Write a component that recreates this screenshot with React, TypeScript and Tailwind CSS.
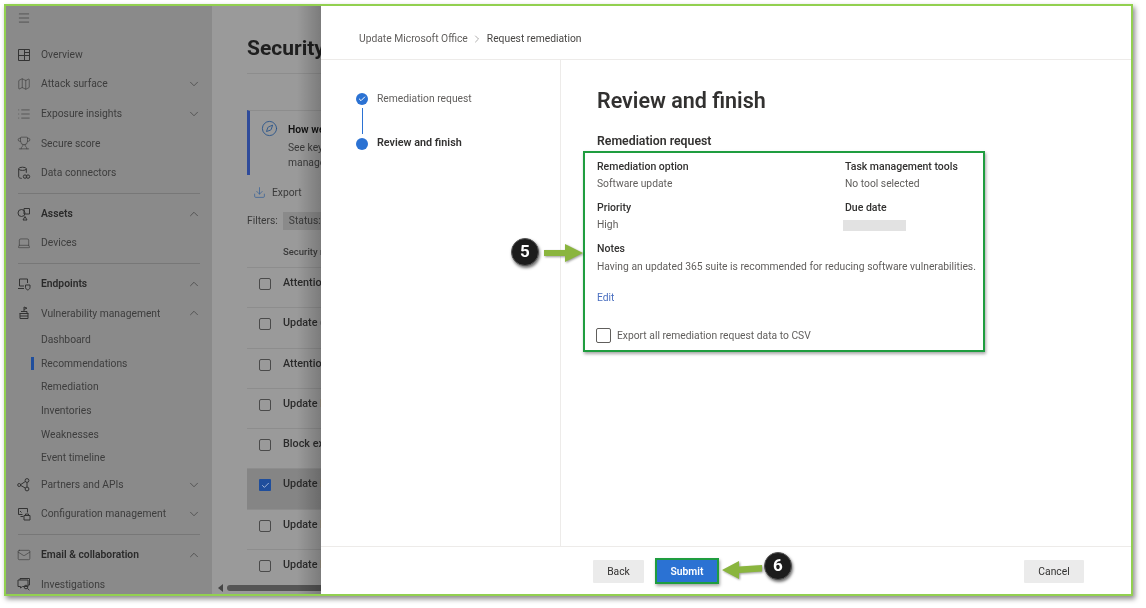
import { Check, ChevronDown, ChevronRight, ChevronUp, Compass, Download, Laptop, List, Mail, Map, Menu, Trophy } from 'lucide-react';

function OverviewIcon() {
  return (
    <svg width="14" height="14" viewBox="0 0 14 14" fill="none" stroke="currentColor" strokeWidth="1">
      <path d="M1.500 1.500h11v11h-11zM1.500 7.500h11M7.500 7.500v5M7.500 1.500v6M7.500 4.500h5" />
    </svg>
  );
}

function DataIcon() {
  return (
    <svg width="14" height="14" viewBox="0 0 14 14" fill="none" stroke="currentColor" strokeWidth="1">
      <ellipse cx="5.500" cy="2.800" rx="3.800" ry="1.600" />
      <path d="M1.700 2.800v8c0 .9 1.300 1.500 3 1.600M9.300 2.800v4" />
      <circle cx="8" cy="10.600" r="1.700" />
      <circle cx="11" cy="10.600" r="1.700" />
    </svg>
  );
}

function AssetsIcon() {
  return (
    <svg width="14" height="14" viewBox="0 0 14 14" fill="none" stroke="currentColor" strokeWidth="1">
      <circle cx="4.500" cy="6" r="3.500" />
      <path d="M7 1.500h5.500v5.500H7zM6 13l2-3.500 2 3.500z" />
    </svg>
  );
}

function EndpointIcon() {
  return (
    <svg width="14" height="14" viewBox="0 0 14 14" fill="none" stroke="currentColor" strokeWidth="1">
      <path d="M7 9H2.500V2h8v4M1 11.500h6" />
      <path d="M8.500 8h4.500v2.500c0 1.200-1 2-2.200 2.500-1.200-.5-2.300-1.300-2.300-2.500z" />
    </svg>
  );
}

function VulnIcon() {
  return (
    <svg width="14" height="14" viewBox="0 0 14 14" fill="none" stroke="currentColor" strokeWidth="1">
      <path d="M7 5V1l3 1.200L7 3.400M2.500 7.500h9M4 5.500h6v2M3 7.500v5h8v-5M3 10h8" />
    </svg>
  );
}

function PartnersIcon() {
  return (
    <svg width="14" height="14" viewBox="0 0 14 14" fill="none" stroke="currentColor" strokeWidth="1">
      <circle cx="2.200" cy="7" r="1.500" />
      <circle cx="10" cy="2.500" r="1.900" />
      <circle cx="10" cy="11" r="1.900" />
      <path d="M3.700 6.600 8.300 3.500M3.700 7.400l4.700 2.700M10 4.500v4.600" />
    </svg>
  );
}

function ConfigIcon() {
  return (
    <svg width="14" height="14" viewBox="0 0 14 14" fill="none" stroke="currentColor" strokeWidth="1">
      <path d="M1.500 7.500v-6h9v4M1.500 7.500h4M3 4l1.500 1.500M3.500 9.500h3" />
      <path d="M7 8.500h6v4.500H7zM8.500 8.500V7h3v1.500" />
    </svg>
  );
}

function InvestigationIcon() {
  return (
    <svg width="14" height="14" viewBox="0 0 14 14" fill="none" stroke="currentColor" strokeWidth="1">
      <path d="M3 3V1.500h9.500V8H11M1 3h10v6.500H5.500L3.500 11V9.500H1z" />
      <circle cx="9" cy="10" r="1.800" />
      <path d="m10.300 11.300 2 1.800" />
    </svg>
  );
}

function NavRow({ icon, label, chevron, bold }: { icon: React.ReactNode; label: string; chevron?: 'up' | 'down'; bold?: boolean }) {
  return (
    <div className="flex h-[29.6px] items-center pl-[11px] pr-[11px] text-[#3d3d3d]">
      <span className="flex w-[24px] shrink-0 text-[#333333]">{icon}</span>
      <span className={bold ? 'flex-1 font-semibold text-[#2a2a2a]' : 'flex-1'}>{label}</span>
      {chevron === 'down' && <ChevronDown size={14} strokeWidth={1.2} />}
      {chevron === 'up' && <ChevronUp size={14} strokeWidth={1.2} />}
    </div>
  );
}

function SubRow({ label, active }: { label: string; active?: boolean }) {
  return (
    <div className="flex h-[23.6px] items-center text-[#3d3d3d]">
      <span className={active ? 'ml-[25px] mr-[7px] h-[13px] w-[3px] bg-[#1f4e9c]' : 'ml-[25px] mr-[7px] w-[3px]'} />
      {label}
    </div>
  );
}

function NavDivider() {
  return <div className="mx-[12px] my-[5px] h-px bg-[#777777]" />;
}

function TableRow({ label, accent, checked }: { label: string; accent?: boolean; checked?: boolean }) {
  return (
    <div className={`flex h-[40.3px] items-start border-b border-[#8d8d8d] pl-[12px] pt-[8px] ${checked ? 'bg-[#858585]' : ''}`}>
      {checked ? (
        <span className="mt-[2px] flex h-[12px] w-[12px] items-center justify-center rounded-[1px] bg-[#1f4e9c] text-[#c9d6ea]">
          <Check size={9} strokeWidth={2} />
        </span>
      ) : (
        <span className="mt-[2px] h-[12px] w-[12px] rounded-[2px] border border-[#4a4a4a]" />
      )}
      <span className="ml-[12px] whitespace-nowrap text-[10.8px] font-medium leading-[14px] text-[#2b2b2b]">
        {label} {accent && <span className="text-[#9b7a3c]">Microsoft</span>}
      </span>
    </div>
  );
}

function Field({ label, value }: { label: string; value?: string }) {
  return (
    <div className="h-[41px]">
      <div className="text-[10.5px] font-medium leading-[16px] text-[#323130]">{label}</div>
      {value ? (
        <div className="mt-px leading-[16px] text-[#605e5c]">{value}</div>
      ) : (
        <div className="-ml-[2px] mt-[4px] h-[11px] w-[63px] bg-[#e2e2e2]" />
      )}
    </div>
  );
}

function Badge({ n, className }: { n: string; className: string }) {
  return (
    <div className={`absolute flex h-[28px] w-[28px] items-center justify-center rounded-full border border-[#555555] bg-[#1c1c1c] text-[17px] font-bold text-white shadow-[1px_2px_3px_rgba(0,0,0,0.55)] ${className}`}>
      {n}
    </div>
  );
}

export default function App() {
  return (
    <div className="relative h-[608px] w-[1146px] overflow-hidden bg-white pl-[4px] pt-[4px] font-['Roboto','Liberation_Sans',sans-serif] text-[10.3px] blur-[0.3px]">
      <div className="flex h-[592px] w-[1129px] overflow-hidden border-2 border-[#92d050] shadow-[2px_3px_5px_rgba(0,0,0,0.45)]">
        {/* left nav */}
        <div className="w-[206px] shrink-0 bg-[#8a8a8a]">
          <div className="flex h-[33.8px] items-start pl-[11px] pt-[5px] text-[#2f2f2f]">
            <Menu size={14} strokeWidth={1} />
          </div>
          <NavRow icon={<OverviewIcon />} label="Overview" />
          <NavRow icon={<Map size={14} strokeWidth={1} />} label="Attack surface" chevron="down" />
          <NavRow icon={<List size={14} strokeWidth={1} />} label="Exposure insights" chevron="down" />
          <NavRow icon={<Trophy size={14} strokeWidth={1} />} label="Secure score" />
          <NavRow icon={<DataIcon />} label="Data connectors" />
          <NavDivider />
          <NavRow icon={<AssetsIcon />} label="Assets" chevron="up" bold />
          <NavRow icon={<Laptop size={14} strokeWidth={1} />} label="Devices" />
          <NavDivider />
          <NavRow icon={<EndpointIcon />} label="Endpoints" chevron="up" bold />
          <NavRow icon={<VulnIcon />} label="Vulnerability management" chevron="up" />
          <SubRow label="Dashboard" />
          <SubRow label="Recommendations" active />
          <SubRow label="Remediation" />
          <SubRow label="Inventories" />
          <SubRow label="Weaknesses" />
          <SubRow label="Event timeline" />
          <NavRow icon={<PartnersIcon />} label="Partners and APIs" chevron="down" />
          <NavRow icon={<ConfigIcon />} label="Configuration management" chevron="down" />
          <NavDivider />
          <NavRow icon={<Mail size={14} strokeWidth={1} />} label="Email & collaboration" chevron="up" bold />
          <NavRow icon={<InvestigationIcon />} label="Investigations" />
        </div>

        {/* page behind the panel */}
        <div className="relative w-[109px] shrink-0 overflow-hidden bg-[#9a9a9a] pl-[35px] text-[#3a3a3a]">
          <div className="h-[68px] w-[300px] border-b border-[#8d8d8d] pt-[28px] text-[21px] font-bold leading-[28px] text-[#1f1f1f]">
            Security
          </div>
          <div className="mt-[36px] flex h-[65px] w-[300px] border-l-[3px] border-t border-l-[#2f4b9a] border-t-[#8d8d8d] pl-[11px] pt-[9px]">
            <Compass size={17} strokeWidth={1.2} className="text-[#245089]" />
            <div className="ml-[10px] mt-[2px] whitespace-nowrap leading-[15px]">
              <div className="font-semibold text-[#111111]">How we help</div>
              <div className="mt-[2.5px]">See key</div>
              <div>management</div>
            </div>
          </div>
          <div className="flex h-[35px] items-center pl-[6px]">
            <Download size={13} strokeWidth={1.2} className="text-[#2a5a98]" />
            <span className="ml-[6px]">Export</span>
          </div>
          <div className="mt-px flex h-[19px] items-center whitespace-nowrap">
            Filters:
            <span className="ml-[5px] flex h-[18px] w-[60px] items-center bg-[#8a8a8a] pl-[6px]">Status:</span>
          </div>
          <div className="h-[38px] w-[300px] whitespace-nowrap border-b border-[#8d8d8d] pl-[36px] pt-[15px] text-[9.5px] font-medium leading-[14px]">
            Security recommendation
          </div>
          <div className="w-[300px]">
            <TableRow label="Attention" />
            <TableRow label="Update (" />
            <TableRow label="Attention" />
            <TableRow label="Update" accent />
            <TableRow label="Block executable" />
            <TableRow label="Update" accent checked />
            <TableRow label="Update" accent />
            <TableRow label="Update" accent />
          </div>
          <div className="absolute bottom-[2px] left-[6px] flex items-center">
            <span className="mr-[4px] h-0 w-0 border-y-[4px] border-r-[5px] border-y-transparent border-r-[#444444]" />
            <span className="h-[6px] w-[120px] rounded-full bg-[#555555]" />
          </div>
          <div className="absolute inset-y-0 right-0 w-[24px] bg-gradient-to-r from-transparent to-[#00000033]" />
        </div>

        {/* side panel */}
        <div className="flex min-w-0 flex-1 flex-col bg-white">
          <div className="flex h-[54px] shrink-0 items-center border-b border-[#edebe9] pl-[38px] pt-[13px] text-[#605e5c]">
            <span>Update Microsoft Office</span>
            <ChevronRight size={12} strokeWidth={1} className="mx-[3.5px]" />
            <span className="text-[#484644]">Request remediation</span>
          </div>
          <div className="flex min-h-0 flex-1">
            <div className="w-[240px] shrink-0 border-r border-[#edebe9] pl-[35px] pt-[32px]">
              <div className="flex h-[13px] items-center">
                <span className="flex h-[12px] w-[12px] items-center justify-center rounded-full bg-[#2b72d3] text-white">
                  <Check size={8} strokeWidth={3} />
                </span>
                <span className="ml-[9px] text-[#605e5c]">Remediation request</span>
              </div>
              <div className="ml-[5.5px] mt-[3px] h-[26px] w-px bg-[#2b72d3]" />
              <div className="mt-[3px] flex h-[13px] items-center">
                <span className="h-[12px] w-[12px] rounded-full bg-[#2b72d3]" />
                <span className="ml-[9px] text-[10.8px] font-semibold text-[#323130]">Review and finish</span>
              </div>
            </div>
            <div className="min-w-0 flex-1 pl-[22px] pt-[25px]">
              <div className="pl-[14px] text-[21.5px] font-semibold leading-[32px] text-[#323130]">Review and finish</div>
              <div className="mt-[16px] pl-[14px] text-[12.3px] font-semibold leading-[16px] text-[#323130]">Remediation request</div>
              <div className="mt-[2px] h-[201px] w-[402px] border-2 border-[#1f9d3f] pl-[12px] pt-[6px] shadow-[1px_2px_3px_rgba(0,0,0,0.35)]">
                <div className="grid grid-cols-[248px_1fr]">
                  <Field label="Remediation option" value="Software update" />
                  <Field label="Task management tools" value="No tool selected" />
                  <Field label="Priority" value="High" />
                  <Field label="Due date" />
                </div>
                <div className="text-[10.5px] font-medium leading-[16px] text-[#323130]">Notes</div>
                <div className="mt-[2px] whitespace-nowrap leading-[16px] text-[#605e5c]">
                  Having an updated 365 suite is recommended for reducing software vulnerabilities.
                </div>
                <div className="mt-[15px] leading-[16px] text-[#4a6fc0]">Edit</div>
                <div className="-ml-px mt-[22px] flex items-center">
                  <span className="h-[15px] w-[15px] rounded-[2px] border border-[#605e5c]" />
                  <span className="ml-[6px] text-[#605e5c]">Export all remediation request data to CSV</span>
                </div>
              </div>
            </div>
          </div>
          <div className="flex h-[48px] shrink-0 items-center border-t border-[#edebe9] pl-[272px] pr-[47px] pt-px">
            <button className="h-[23px] w-[51px] rounded-[1px] bg-[#ebebeb] pt-px text-[#323130]">Back</button>
            <button className="ml-[11px] h-[26px] w-[64px] border-2 border-[#1f9d3f] bg-[#2b72d3] pt-px font-semibold text-white shadow-[1px_2px_3px_rgba(0,0,0,0.35)]">Submit</button>
            <button className="ml-auto h-[23px] w-[60px] rounded-[1px] bg-[#ebebeb] pt-px text-[#323130]">Cancel</button>
          </div>
        </div>
      </div>

      {/* callouts over the page */}
      <Badge n="5" className="left-[511px] top-[238px]" />
      <svg className="absolute left-[543px] top-[243px] drop-shadow-[1px_1px_1px_rgba(0,0,0,0.4)]" width="41" height="20" viewBox="0 0 41 20">
        <path d="M1 7h21V1l18 9-18 9v-6H1z" fill="#8ab53e" />
      </svg>
      <Badge n="6" className="left-[764px] top-[552px]" />
      <svg className="absolute left-[721px] top-[560px] drop-shadow-[1px_1px_1px_rgba(0,0,0,0.4)]" width="42" height="20" viewBox="0 0 42 20">
        <path d="M41 5 18 6.500V1L1 10l17 9v-6l23-1.500z" fill="#8ab53e" />
      </svg>
    </div>
  );
}
